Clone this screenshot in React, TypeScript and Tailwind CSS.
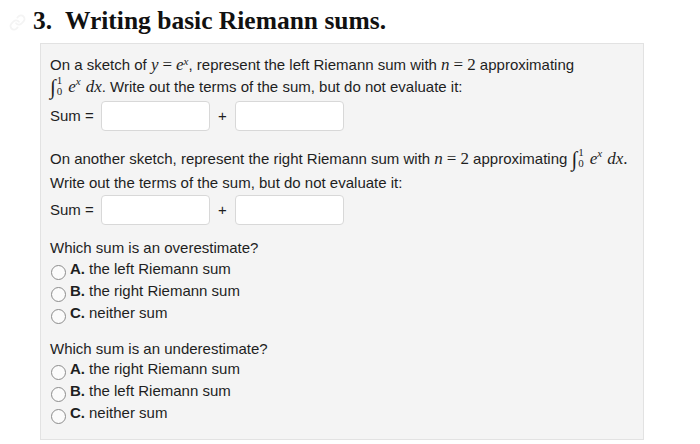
import { Link } from "lucide-react";

const serif = { fontFamily: '"Liberation Serif", "Times New Roman", serif' };

function M({ children }: { children: React.ReactNode }) {
  return (
    <span className="text-[17px] italic" style={serif}>
      {children}
    </span>
  );
}

function Eq() {
  return (
    <span className="text-[17px] mx-[4px]" style={serif}>
      =
    </span>
  );
}

function Two() {
  return (
    <span className="text-[17px]" style={serif}>
      2
    </span>
  );
}

function Integral() {
  return (
    <span className="inline-flex items-center align-middle" style={serif}>
      <span className="text-[21px] italic leading-none">∫</span>
      <span className="flex flex-col text-[11px] leading-[11px] ml-[1px] -mt-[2px]">
        <span>1</span>
        <span>0</span>
      </span>
      <span className="ml-[6px] text-[17px] italic">
        e<sup className="text-[11px] -top-[7px]">x</sup>
      </span>
      <span className="ml-[5px] text-[17px] italic">dx</span>
    </span>
  );
}

function SumRow() {
  return (
    <div className="flex items-center h-[30px]">
      <span className="w-[51px]">Sum =</span>
      <div className="w-[109px] h-[30px] bg-white border border-[#d8d8d8] rounded-[4px]" />
      <span className="w-[25px] text-center">+</span>
      <div className="w-[109px] h-[30px] bg-white border border-[#d8d8d8] rounded-[4px]" />
    </div>
  );
}

function Option({ letter, text }: { letter: string; text: string }) {
  return (
    <div className="flex items-center h-[22px]">
      <span className="w-[15px] h-[15px] rounded-full border border-[#8c8c8c] bg-[#fbfbfb] translate-y-[3px] ml-[1px] mr-[4px]" />
      <span className="font-bold">{letter}.</span>
      <span className="ml-[4px]">{text}</span>
    </div>
  );
}

export default function App() {
  return (
    <div className="w-[700px] h-[444px] bg-white overflow-hidden relative">
      <Link className="absolute left-[9px] top-[14px] text-[#f4f4f4]" size={17} strokeWidth={2.5} />
      <div className="h-[43px] flex items-center pl-[33px]">
        <h1 className="text-[25.5px] font-bold text-[#111]" style={serif}>
          3.&nbsp;&nbsp;Writing basic Riemann sums.
        </h1>
      </div>
      <div
        className="ml-[40px] w-[604px] h-[397px] bg-[#f4f4f4] border border-[#e2e2e2] px-[9px] pt-[10px] text-[15px] text-[#1e1e1e] leading-[22px]"
        style={{ fontFamily: '"Liberation Sans", Arial, sans-serif' }}
      >
        <div>
          On a sketch of <M>y</M>
          <Eq />
          <M>e</M>
          <sup className="text-[11px] italic" style={serif}>x</sup>, represent the left Riemann sum with <M>n</M>
          <Eq />
          <Two /> approximating
        </div>
        <div className="flex items-center">
          <Integral />
          <span>. Write out the terms of the sum, but do not evaluate it:</span>
        </div>
        <div className="mt-[3px]">
          <SumRow />
        </div>

        <div className="mt-[16px] flex items-center h-[24px] whitespace-nowrap">
          <span>
            On another sketch, represent the right Riemann sum with <M>n</M>
            <Eq />
            <Two /> approximating&nbsp;
          </span>
          <Integral />
          <span className="text-[17px]" style={serif}>.</span>
        </div>
        <div className="mt-[1px]">Write out the terms of the sum, but do not evaluate it:</div>
        <div className="mt-[1px]">
          <SumRow />
        </div>

        <div className="mt-[12px]">Which sum is an overestimate?</div>
        <div className="-mt-[1px]">
          <Option letter="A" text="the left Riemann sum" />
          <Option letter="B" text="the right Riemann sum" />
          <Option letter="C" text="neither sum" />
        </div>

        <div className="mt-[14px]">Which sum is an underestimate?</div>
        <div className="-mt-[2px]">
          <Option letter="A" text="the right Riemann sum" />
          <Option letter="B" text="the left Riemann sum" />
          <Option letter="C" text="neither sum" />
        </div>
      </div>
    </div>
  );
}
